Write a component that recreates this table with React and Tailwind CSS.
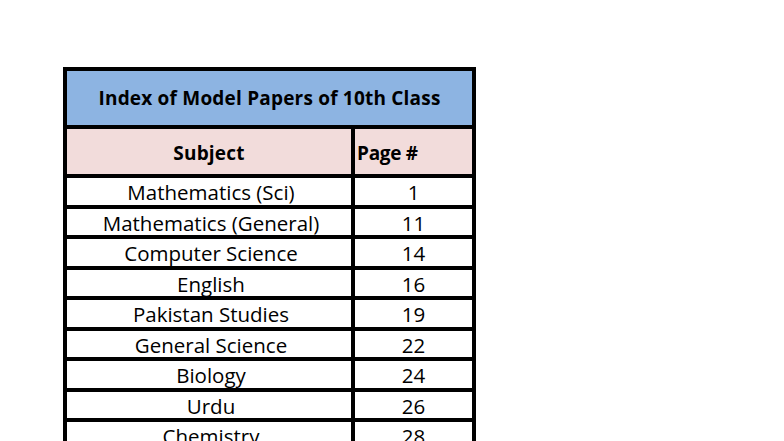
import React from "react";

const rows = [
  ["Mathematics (Sci)", "1"],
  ["Mathematics (General)", "11"],
  ["Computer Science", "14"],
  ["English", "16"],
  ["Pakistan Studies", "19"],
  ["General Science", "22"],
  ["Biology", "24"],
  ["Urdu", "26"],
  ["Chemistry", "28"],
];

function IndexRow({ subject, page }) {
  return (
    <div className="flex h-[30.5px] border-t-4 border-black text-[20.5px]">
      <div className="w-[288px] border-r-4 border-black flex items-center justify-center pl-[4px] pt-[2px]">
        {subject}
      </div>
      <div className="flex-1 flex items-center justify-center pt-[2px]">{page}</div>
    </div>
  );
}

export default function App() {
  return (
    <div
      className="w-full h-[441px] overflow-hidden bg-white pl-[63px] pt-[67px] text-black"
      style={{ fontFamily: '"Open Sans", "Noto Sans", sans-serif' }}
    >
      <div className="w-[413px] border-4 border-black leading-none">
        {/* title */}
        <div className="h-[58px] border-b-4 border-black bg-[#8db4e2] flex items-center justify-center font-bold text-[19px] tracking-[0.2px]">
          Index of Model Papers of 10th Class
        </div>

        {/* column headings */}
        <div className="flex h-[45px] bg-[#f2dcdb] font-bold text-[19px]">
          <div className="w-[288px] border-r-4 border-black flex items-center justify-center tracking-[0.2px] pt-[3px]">
            Subject
          </div>
          <div className="flex-1 flex items-center pl-[2px] tracking-[-0.3px] pt-[3px]">Page #</div>
        </div>

        {rows.map(([subject, page]) => (
          <IndexRow key={subject} subject={subject} page={page} />
        ))}
      </div>
    </div>
  );
}
